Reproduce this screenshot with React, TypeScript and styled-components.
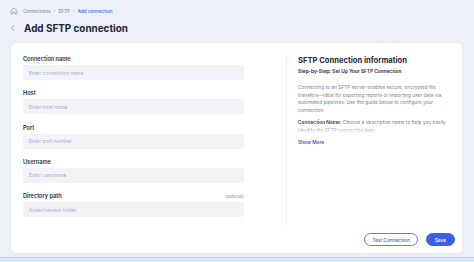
import React from "react";
import styled, { createGlobalStyle } from "styled-components";

const GlobalStyle = createGlobalStyle`
  html, body {
    margin: 0;
    padding: 0;
    background: #eef0f7;
  }
  body {
    font-family: "Inter", "Noto Sans", sans-serif;
    color: #23283a;
  }
  * { box-sizing: border-box; }
`;

const fields = [
  { label: "Connection name", placeholder: "Enter connection name" },
  { label: "Host", placeholder: "Enter host name" },
  { label: "Port", placeholder: "Enter port number" },
  { label: "Username", placeholder: "Enter username" },
  { label: "Directory path", placeholder: "folder/nested-folder", optional: true },
];

export default function App() {
  return (
    <>
      <GlobalStyle />
      <Page>
        <Header>
          <Crumbs>
            <svg width="8" height="8" viewBox="0 0 24 24" fill="none" stroke="#8a90a2" strokeWidth="2" strokeLinejoin="round">
              <path d="M3 10.5 12 3l9 7.5V20a1 1 0 0 1-1 1h-5v-6h-6v6H4a1 1 0 0 1-1-1z" />
            </svg>
            <Crumb>Connections</Crumb>
            <Sep>›</Sep>
            <Crumb>SFTP</Crumb>
            <Sep>›</Sep>
            <Crumb active>Add connection</Crumb>
          </Crumbs>
          <TitleRow>
            <BackIcon width="6" height="8" viewBox="0 0 6 8" fill="none" stroke="#a3a8b8" strokeWidth="1">
              <path d="M4 1.2 1.4 4 4 6.8" />
            </BackIcon>
            <Title>Add SFTP connection</Title>
          </TitleRow>
        </Header>

        <Card>
          <Body>
            <Form>
              {fields.map((f) => (
                <Field key={f.label}>
                  <LabelRow>
                    <Label>{f.label}</Label>
                    {f.optional && <Optional>(optional)</Optional>}
                  </LabelRow>
                  <Input placeholder={f.placeholder} />
                </Field>
              ))}
            </Form>
            <Info>
              <InfoTitle>SFTP Connection information</InfoTitle>
              <InfoSub>Step-by-Step: Set Up Your SFTP Connection</InfoSub>
              <InfoText>
                Connecting to an SFTP server enables secure, encrypted file
                transfers—ideal for exporting reports or importing user data via
                automated pipelines. Use the guide below to configure your
                connection.
              </InfoText>
              <Faded>
                <strong>Connection Name:</strong> Choose a descriptive name to help you easily
                identify the SFTP connection later.
              </Faded>
              <ShowMore>Show More</ShowMore>
            </Info>
          </Body>
          <Footer>
            <Button variant="outline">Test Connection</Button>
            <Button variant="primary">Save</Button>
          </Footer>
        </Card>
        <BottomBar />
      </Page>
    </>
  );
}

const Page = styled.div`
  width: 474px;
  height: 262px;
  overflow: hidden;
  padding: 6px 11px 0 10px;
  display: flex;
  flex-direction: column;
`;

const Header = styled.header`
  flex: none;
  display: flex;
  flex-direction: column;
  gap: 6px;
  height: 36px;
`;

const Crumbs = styled.nav`
  display: flex;
  align-items: center;
  gap: 3px;
  height: 10px;
  font-size: 4.6px;
  svg { margin-right: 2px; }
`;

const Crumb = styled.span<{ active?: boolean }>`
  color: ${(p) => (p.active ? "#4464e6" : "#7d8396")};
  font-weight: ${(p) => (p.active ? 500 : 400)};
`;

const Sep = styled.span`
  color: #9aa0b0;
  font-size: 5px;
`;

const TitleRow = styled.div`
  display: flex;
  align-items: center;
  gap: 8px;
`;

const BackIcon = styled.svg`
  flex: none;
`;

const Title = styled.h1`
  margin: 0;
  font-size: 9.9px;
  font-weight: 700;
  color: #1f2538;
`;

const Card = styled.section`
  flex: none;
  height: 212px;
  background: #fff;
  border-radius: 6px;
  border: 1px solid #e7eaf3;
  padding: 11px 7px 7px 12px;
  display: flex;
  flex-direction: column;
`;

const Body = styled.div`
  flex: 1;
  display: grid;
  grid-template-columns: 221px 1fr;
  column-gap: 42px;
  padding-right: 4px;
`;

const Form = styled.div`
  display: flex;
  flex-direction: column;
  gap: 4.3px;
  padding-top: 2px;
`;

const Field = styled.div`
  display: flex;
  flex-direction: column;
  gap: 3px;
  height: 30px;
`;

const LabelRow = styled.div`
  display: flex;
  justify-content: space-between;
  align-items: baseline;
`;

const Label = styled.label`
  font-size: 5.6px;
  font-weight: 600;
  color: #272c3b;
`;

const Optional = styled.span`
  font-size: 4.2px;
  color: #8a90a0;
`;

const Input = styled.input`
  height: 15px;
  border: none;
  outline: none;
  border-radius: 2px;
  background: #f2f3f8;
  padding: 0 6px;
  font-family: inherit;
  font-size: 5px;
  color: #2b2f3a;
  &::placeholder { color: #aab0bf; }
`;

const Info = styled.aside`
  border-left: 1px solid #eef0f5;
  padding: 2px 0 0 11px;
  height: 172px;
  display: flex;
  flex-direction: column;
`;

const InfoTitle = styled.h2`
  margin: 0;
  font-size: 7.6px;
  font-weight: 700;
  color: #222838;
`;

const InfoSub = styled.div`
  margin-top: 3px;
  font-size: 4.8px;
  font-weight: 700;
  color: #3a4060;
`;

const InfoText = styled.p`
  margin: 10px 0 0;
  font-size: 4.8px;
  line-height: 7.5px;
  color: #7c8294;
`;

const Faded = styled.p`
  margin: 5px 0 0;
  font-size: 4.8px;
  line-height: 7.5px;
  color: #7c8294;
  -webkit-mask-image: linear-gradient(to bottom, #000 45%, rgba(0,0,0,0.15) 100%);
  mask-image: linear-gradient(to bottom, #000 45%, rgba(0,0,0,0.15) 100%);
  strong { color: #4a5068; font-weight: 700; }
`;

const ShowMore = styled.a`
  margin-top: 5px;
  font-size: 4.8px;
  font-weight: 600;
  color: #3f5bc8;
`;

const Footer = styled.div`
  display: flex;
  justify-content: flex-end;
  gap: 8px;
`;

const Button = styled.button<{ variant: "outline" | "primary" }>`
  height: 13px;
  border-radius: 7px;
  font-family: inherit;
  font-size: 4.8px;
  font-weight: 500;
  padding: 0 ${(p) => (p.variant === "outline" ? "7px" : "8px")};
  border: 1px solid ${(p) => (p.variant === "outline" ? "#5a7ee6" : "#3d5fe8")};
  background: ${(p) => (p.variant === "outline" ? "#fff" : "#3d5fe8")};
  color: ${(p) => (p.variant === "outline" ? "#3f5fd6" : "#fff")};
`;

const BottomBar = styled.div`
  flex: none;
  margin: 3px -11px 0 -10px;
  height: 6px;
  background: #cfe5f8;
  border-top: 1px solid #b7d6f3;
`;
